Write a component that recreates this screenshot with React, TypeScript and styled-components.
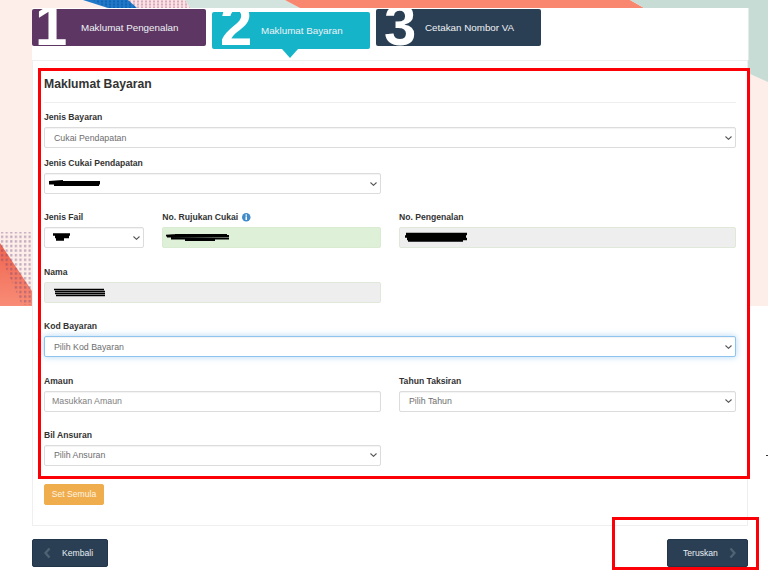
import styled, { createGlobalStyle, css } from 'styled-components';
import type { ReactNode } from 'react';

const GlobalStyle = createGlobalStyle`
  html, body {
    margin: 0;
    padding: 0;
    background: #fff;
  }
  body {
    font-family: "Liberation Sans", Arial, sans-serif;
    color: #333;
  }
`;

const Page = styled.div`
  position: relative;
  width: 768px;
  height: 574px;
  overflow: hidden;
  padding: 8px 20px 0 32px;
  box-sizing: border-box;
`;

const Backdrop = styled.svg`
  position: absolute;
  top: 0;
  left: 0;
`;

// the strip of artwork above the sheet, painted over the tall step digits
const TopBand = styled.svg`
  position: absolute;
  top: 0;
  left: 0;
  z-index: 2;
`;

const Sheet = styled.div`
  position: relative;
  background: #fff;
`;

const StepsBar = styled.div`
  display: flex;
  align-items: flex-start;
  gap: 6px;
  height: 52px;
  padding-top: 1px;
  box-sizing: border-box;
  box-shadow: 0 -1px 0 #e4ecea, 1px 0 0 #e4ecea;
`;

const Step = styled.div<{ $width: number; $color: string; $active?: boolean }>`
  position: relative;
  width: ${(p) => p.$width}px;
  height: 36.5px;
  margin-top: ${(p) => (p.$active ? '3px' : '0')};
  padding-left: 49px;
  box-sizing: border-box;
  display: flex;
  align-items: center;
  background: ${(p) => p.$color};
  border-radius: 2px;
  color: #eef2f5;
  font-size: 9.8px;
  ${(p) =>
    p.$active &&
    css`
      &::after {
        content: '';
        position: absolute;
        left: 70px;
        bottom: -9px;
        border-left: 8.5px solid transparent;
        border-right: 8.5px solid transparent;
        border-top: 9px solid ${p.$color};
      }
    `}
`;

const Digit = styled.span<{ $active?: boolean; $left?: number }>`
  position: absolute;
  left: ${(p) => p.$left ?? 8}px;
  top: ${(p) => (p.$active ? '-4px' : '-1px')};
  font-size: 58px;
  line-height: 33px;
  font-weight: 700;
  color: #fff;
`;

const Panel = styled.div`
  border: 1px solid #efefef;
  padding: 15px 11px 20px;
  height: 466px;
  box-sizing: border-box;
`;

const Heading = styled.h2`
  margin: 0 0 10px;
  font-size: 12.2px;
  line-height: 16px;
  font-weight: 700;
  color: #333;
`;

const Rule = styled.hr`
  margin: 0 0 8px;
  border: 0;
  border-top: 1px solid #eee;
`;

const FormGrid = styled.div`
  display: grid;
  grid-template-columns: repeat(12, 1fr);
  column-gap: 18px;
  row-gap: 17.4px;
`;

const Field = styled.div<{ $span?: number; $start?: number; $gapBelow?: number }>`
  grid-column: ${(p) => (p.$start ? `${p.$start} / ` : '')}span ${(p) => p.$span ?? 12};
  margin-bottom: ${(p) => p.$gapBelow ?? 0}px;
`;

const Label = styled.label`
  display: flex;
  align-items: center;
  gap: 4px;
  margin-bottom: 4px;
  font-size: 8.6px;
  line-height: 12px;
  font-weight: 700;
  color: #333;
`;

const InfoIcon = styled.svg`
  display: block;
`;

const Control = styled.div`
  position: relative;
`;

const controlBase = css`
  display: block;
  width: 100%;
  height: 21px;
  box-sizing: border-box;
  border: 1px solid #dcdcdc;
  border-radius: 2px;
  background-color: #fff;
  font-family: "Liberation Sans", Arial, sans-serif;
  font-size: 8.8px;
  color: #6e6e6e;
  outline: none;
  box-shadow: inset 0 1px 1px rgba(0, 0, 0, 0.05);
`;

const Select = styled.select<{ $focused?: boolean }>`
  ${controlBase}
  appearance: none;
  padding: 0 18px 0 9px;
  ${(p) =>
    p.$focused &&
    css`
      border-color: #8fc4ee;
      box-shadow: inset 0 1px 1px rgba(0, 0, 0, 0.05), 0 0 6px rgba(102, 175, 233, 0.5);
    `}
`;

const SelectArrow = styled.svg`
  position: absolute;
  right: 4.5px;
  top: 8.5px;
  pointer-events: none;
`;

const Input = styled.input<{ $tone?: 'valid' | 'locked' }>`
  ${controlBase}
  padding: 0 7px;
  &::placeholder {
    color: #808080;
    opacity: 1;
  }
  ${(p) =>
    p.$tone === 'valid' &&
    css`
      background-color: #dff0d8;
      border-color: #d9ebd0;
      box-shadow: none;
    `}
  ${(p) =>
    p.$tone === 'locked' &&
    css`
      background-color: #eee;
      border-color: #e0e8da;
      box-shadow: none;
    `}
`;

// hand drawn redaction marks over the filled-in values
const Scribble = styled.svg<{ $left: number; $top: number }>`
  position: absolute;
  left: ${(p) => p.$left}px;
  top: ${(p) => p.$top}px;
  pointer-events: none;
`;

const ResetButton = styled.button`
  display: block;
  width: 60px;
  height: 21px;
  margin-top: 18px;
  padding: 0;
  border: 1px solid #f0ad4e;
  border-radius: 2px;
  background: #f0ad4e;
  color: #fdf3e2;
  font-family: inherit;
  font-size: 8.6px;
`;

const Footer = styled.div`
  display: flex;
  justify-content: space-between;
  margin-top: 13px;
`;

const NavButton = styled.button<{ $width: number }>`
  display: flex;
  align-items: center;
  width: ${(p) => p.$width}px;
  height: 28px;
  padding: 0 0 0 11px;
  border: 1px solid #22354a;
  border-radius: 2px;
  background: #2a3f54;
  color: #e9eef2;
  font-family: inherit;
  font-size: 8.6px;
`;

const NavText = styled.span<{ $before?: number; $after?: number }>`
  margin-left: ${(p) => p.$before ?? 0}px;
  margin-right: ${(p) => p.$after ?? 0}px;
`;

const Annotation = styled.div<{ $x: number; $y: number; $w: number; $h: number }>`
  position: absolute;
  left: ${(p) => p.$x}px;
  top: ${(p) => p.$y}px;
  width: ${(p) => p.$w}px;
  height: ${(p) => p.$h}px;
  box-sizing: border-box;
  border: 3px solid #fb0007;
  pointer-events: none;
`;

const EdgeMark = styled.span`
  position: absolute;
  left: 766px;
  top: 455px;
  width: 2px;
  height: 1px;
  background: #333;
`;

const Chevron = ({ left }: { left?: boolean }) => (
  <svg width="7" height="12" viewBox="0 0 7 12" fill="none">
    <path d={left ? 'M5.5 1.5 1.5 6l4 4.5' : 'M1.5 1.5 5.5 6l-4 4.5'} stroke="#4f6374" strokeWidth="2.4" />
  </svg>
);

const Dropdown = ({
  focused,
  children,
  placeholder,
}: {
  focused?: boolean;
  children?: ReactNode;
  placeholder?: string;
}) => (
  <Control>
    <Select $focused={focused} defaultValue="">
      <option value="">{placeholder}</option>
    </Select>
    <SelectArrow width="7" height="4" viewBox="0 0 7 4" fill="none">
      <path d="M.5.5 3.5 3.3 6.5.5" stroke="#555" strokeWidth="1.1" />
    </SelectArrow>
    {children}
  </Control>
);

function App() {
  return (
    <Page>
      <GlobalStyle />
      <Backdrop width="768" height="306" viewBox="0 0 768 306">
        <defs>
          <pattern id="dots" width="4.6" height="4.6" patternUnits="userSpaceOnUse">
            <rect x="1" y="1" width="2.2" height="2.4" fill="#5a3a76" fillOpacity="0.38" />
          </pattern>
          <linearGradient id="coral" x1="0" y1="0" x2="0" y2="1">
            <stop offset="0" stopColor="#f0644f" />
            <stop offset="1" stopColor="#f88c76" />
          </linearGradient>
        </defs>
        <rect width="768" height="306" fill="#feeee9" />
        <polygon points="748,8 768,8 768,82 748,73" fill="#c7dcd5" />
        <polygon points="0,243 32,291 32,306 0,306" fill="url(#coral)" />
        <polygon points="0,232 31,232 31,305 22,305 3,262 0,262" fill="url(#dots)" />
      </Backdrop>
      <TopBand width="768" height="8" viewBox="0 0 768 8">
        <defs>
          <pattern id="dotsBlue" width="4" height="3" patternUnits="userSpaceOnUse">
            <rect x="1" y="0.5" width="2" height="2" fill="#0f5aa8" fillOpacity="0.7" />
          </pattern>
          <pattern id="dotsPink" width="4" height="3" patternUnits="userSpaceOnUse">
            <rect x="1" y="0.5" width="2" height="2" fill="#c98fb0" fillOpacity="0.7" />
          </pattern>
        </defs>
        <rect width="768" height="8" fill="#feeee9" />
        <polygon points="185,0 285,0 300,8 190,8" fill="#d3e3dd" />
        <polygon points="285,0 630,0 644,8 300,8" fill="#f9866f" />
        <polygon points="630,0 768,0 768,8 644,8" fill="#c7dcd5" />
        <polygon points="128,0 185,0 190,8 137,8" fill="#fbe3e4" />
        <polygon points="128,0 185,0 190,8 137,8" fill="url(#dotsPink)" />
        <polygon points="83,0 128,0 137,8 108,8" fill="#1f78c8" />
        <polygon points="92,0 128,0 137,8 108,8" fill="url(#dotsBlue)" />
      </TopBand>
      <Sheet>
        <StepsBar>
          <Step $width={174} $color="#5d3663">
            <Digit $left={3}>1</Digit>
            <span>Maklumat Pengenalan</span>
          </Step>
          <Step $width={158} $color="#15b4c9" $active>
            <Digit $active>2</Digit>
            <span>Maklumat Bayaran</span>
          </Step>
          <Step $width={165} $color="#2a3f54">
            <Digit>3</Digit>
            <span>Cetakan Nombor VA</span>
          </Step>
        </StepsBar>
        <Panel>
          <Heading>Maklumat Bayaran</Heading>
          <Rule />
          <Field $gapBelow={9}>
            <Label>Jenis Bayaran</Label>
            <Dropdown placeholder="Cukai Pendapatan" />
          </Field>
          <FormGrid>
            <Field $span={6} $start={1}>
              <Label>Jenis Cukai Pendapatan</Label>
              <Dropdown>
                <Scribble $left={4} $top={6} width="53" height="8" viewBox="0 0 53 8">
                  <path d="M1 3 15 2 M1 4.5h51 M8 3h44 M6 6h45" stroke="#000" strokeWidth="2" fill="none" />
                </Scribble>
              </Dropdown>
            </Field>
            <Field $span={2} $start={1}>
              <Label>Jenis Fail</Label>
              <Dropdown>
                <Scribble $left={9} $top={6} width="18" height="8" viewBox="0 0 18 8">
                  <path d="M0 1.5h17 M2 4h14 M3 6.5h8" stroke="#000" strokeWidth="2.4" fill="none" />
                </Scribble>
              </Dropdown>
            </Field>
            <Field $span={4}>
              <Label>
                No. Rujukan Cukai
                <InfoIcon width="8.5" height="8.5" viewBox="0 0 9 9">
                  <circle cx="4.5" cy="4.5" r="4.5" fill="#428bca" />
                  <rect x="3.7" y="1.5" width="1.6" height="1.4" fill="#fff" />
                  <rect x="3.7" y="3.6" width="1.6" height="3.8" fill="#fff" />
                </InfoIcon>
              </Label>
              <Control>
                <Input $tone="valid" readOnly />
                <Scribble $left={3} $top={5} width="65" height="10" viewBox="0 0 65 10">
                  <path d="M1 3.6 12 3 M2 4.5 64 4 M10 3h52 M6 6.5 64 6.5 M20 8h30" stroke="#000" strokeWidth="1.9" fill="none" />
                </Scribble>
              </Control>
            </Field>
            <Field $span={6}>
              <Label>No. Pengenalan</Label>
              <Control>
                <Input $tone="locked" readOnly />
                <Scribble $left={6} $top={5} width="62" height="10" viewBox="0 0 62 10">
                  <path d="M1 2h61 M0 4.5h61 M2 7h60 M3 8.6h55" stroke="#000" strokeWidth="2.4" fill="none" />
                </Scribble>
              </Control>
            </Field>
            <Field $span={6} $start={1}>
              <Label>Nama</Label>
              <Control>
                <Input $tone="locked" readOnly />
                <Scribble $left={9} $top={6} width="52" height="9" viewBox="0 0 52 9">
                  <path d="M1 1.5h50 M2 3.5h50 M2 5.5h50 M3 7.5h49" stroke="#000" strokeWidth="1.5" fill="none" />
                </Scribble>
              </Control>
            </Field>
            <Field $span={12}>
              <Label>Kod Bayaran</Label>
              <Dropdown focused placeholder="Pilih Kod Bayaran" />
            </Field>
            <Field $span={6}>
              <Label>Amaun</Label>
              <Input placeholder="Masukkan Amaun" />
            </Field>
            <Field $span={6}>
              <Label>Tahun Taksiran</Label>
              <Dropdown placeholder="Pilih Tahun" />
            </Field>
            <Field $span={6}>
              <Label>Bil Ansuran</Label>
              <Dropdown placeholder="Pilih Ansuran" />
            </Field>
          </FormGrid>
          <ResetButton>Set Semula</ResetButton>
        </Panel>
        <Footer>
          <NavButton $width={76}>
            <Chevron left />
            <NavText $before={11}>Kembali</NavText>
          </NavButton>
          <NavButton $width={81}>
            <NavText $before={4} $after={11}>Teruskan</NavText>
            <Chevron />
          </NavButton>
        </Footer>
      </Sheet>
      <Annotation $x={38} $y={68} $w={712} $h={411} />
      <Annotation $x={612} $y={517} $w={147} $h={53} />
      <EdgeMark />
    </Page>
  );
}
export default App;
